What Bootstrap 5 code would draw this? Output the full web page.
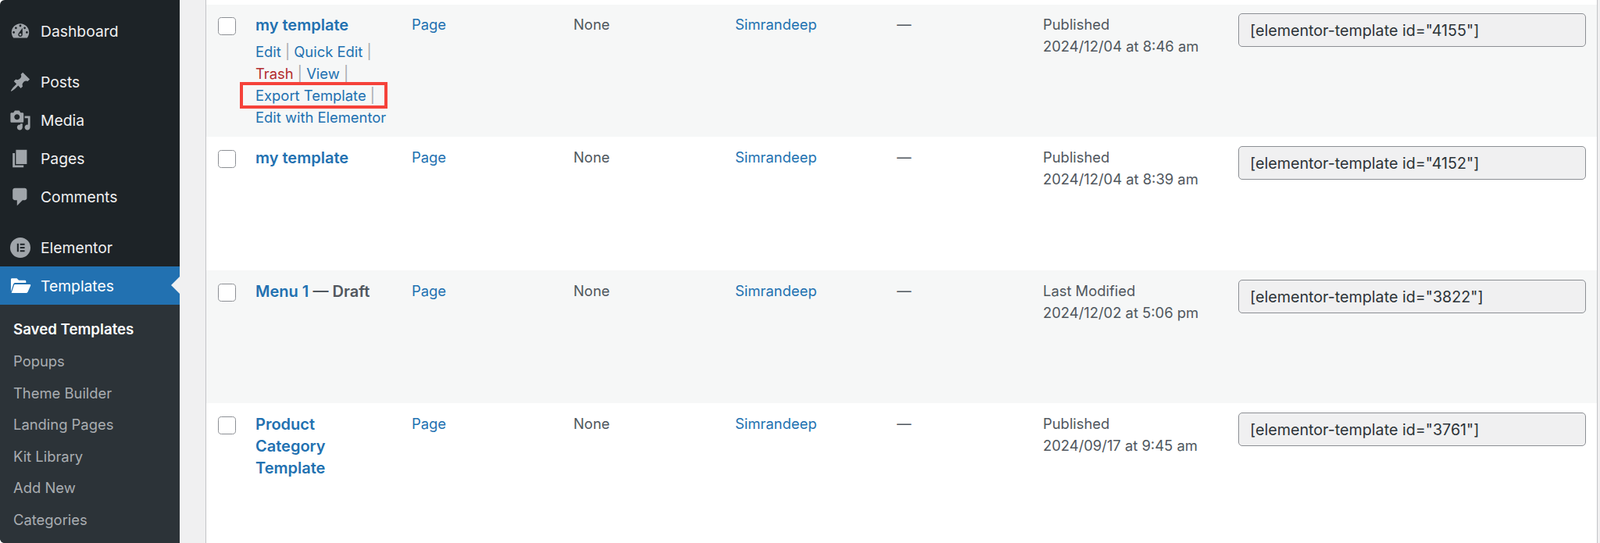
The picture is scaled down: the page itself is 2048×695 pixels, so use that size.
<!DOCTYPE html>
<html lang="en">
<head>
    <meta charset="UTF-8">
    <meta name="viewport" content="width=device-width, initial-scale=1.0">
    <title>Saved Templates</title>
    <link href="https://cdn.jsdelivr.net/npm/bootstrap@5.3.0/dist/css/bootstrap.min.css" rel="stylesheet">
    <style>
        html, body {
            height: 100%;
            overflow: hidden;
        }
        body {
            background: #fff;
            color: #50575e;
            font-family: Inter, "Liberation Sans", sans-serif;
            font-size: 18.4px;
            line-height: 28px;
        }
        a {
            color: #2271b1;
            text-decoration: none;
        }
        .wp-shell {
            height: 695px;
        }
        .wp-side {
            width: 230px;
            background: #1d2327;
            padding-top: 15px;
            border-radius: 6px 0 0 6px;
            overflow: hidden;
        }
        .wp-item {
            height: 49px;
            padding: 0 0 0 12px;
            gap: 12px;
            color: #f0f0f1;
            font-size: 19.3px;
            position: relative;
        }
        .wp-item svg {
            width: 28px;
            height: 28px;
            fill: #a0a5aa;
            flex: none;
        }
        .wp-gap {
            margin-top: 16px;
        }
        .wp-item.is-open {
            background: #2271b1;
            color: #fff;
        }
        .wp-item.is-open svg {
            fill: #fff;
        }
        .wp-item.is-open::after {
            content: "";
            position: absolute;
            right: 0;
            top: 13px;
            border: 11.5px solid transparent;
            border-right-color: #f0f0f1;
            border-left-width: 0;
        }
        .wp-sub {
            background: #2c3338;
            padding-top: 11.5px;
            flex: 1;
        }
        .wp-sub a {
            display: block;
            height: 40.6px;
            line-height: 40.6px;
            padding-left: 17px;
            color: #a9adb1;
        }
        .wp-sub a.is-current {
            color: #fff;
            font-size: 18.7px;
            font-weight: 600;
        }
        .wp-main {
            background: #f0f0f1;
            padding: 0 3px 0 33px;
        }
        .wp-panel {
            height: 100%;
            padding-top: 6px;
            background: #fff;
            border-left: 1px solid #c3c4c7;
            border-right: 1px solid #c3c4c7;
        }
        .wp-table {
            table-layout: fixed;
            width: 100%;
            margin: 0;
            color: #50575e;
        }
        .wp-table td {
            padding: 11px 0 0;
            vertical-align: top;
            background: transparent;
            color: #50575e;
            box-shadow: none;
        }
        .wp-table tr {
            height: 170px;
        }
        .wp-table tr:nth-child(1) {
            height: 169px;
        }
        .wp-table tr:nth-child(2) {
            height: 171px;
        }
        .wp-table tr:nth-child(odd) td {
            background: #f6f7f7;
        }
        .wp-table tr:not(:first-child) td {
            padding-top: 12px;
        }
        .wp-table td.cell-title {
            padding-top: 12px;
        }
        .wp-table tr:not(:first-child) td.cell-title {
            padding-top: 13px;
        }
        .wp-table td.cell-check {
            padding: 16px 0 0 15px;
        }
        .wp-table td.cell-code {
            padding: 11px 14px 0 0;
        }
        .wp-table tr:not(:first-child) td.cell-check {
            padding-top: 17px;
        }
        .wp-check {
            width: 23px;
            height: 23px;
            margin: 0;
            display: block;
            background-color: #fff;
            border: 1.5px solid #8c8f94;
            border-radius: 5px;
        }
        .row-title {
            font-size: 20px;
            font-weight: 600;
        }
        .row-state {
            font-size: 20px;
            font-weight: 600;
            color: #50575e;
        }
        .row-links {
            margin-top: 5.5px;
        }
        .row-line {
            display: block;
            white-space: nowrap;
            position: relative;
        }
        .row-sep {
            color: #a7aaad;
        }
        .row-trash {
            color: #b32d2e;
        }
        .row-mark {
            position: absolute;
            left: -20px;
            top: -2.5px;
            width: 189px;
            height: 34px;
            border: 4px solid #f5423a;
        }
        .code-box {
            height: 43px;
            padding: 0 14px;
            font-size: 19.7px;
            color: #2c3338;
            background: #f0f0f1;
            border: 1.5px solid #8c8f94;
            border-radius: 5px;
            font-family: Inter, "Liberation Sans", sans-serif;
        }
        .code-box:focus {
            background: #f0f0f1;
            border-color: #8c8f94;
            box-shadow: none;
        }
    </style>
</head>
<body>
    <div class="wp-shell d-flex">
        <div class="wp-side d-flex flex-column flex-shrink-0">
            <a class="wp-item d-flex align-items-center" href="#">
                <svg viewBox="0 0 20 20"><path fill-rule="evenodd" d="M3.76 16h12.48c1.1-1.37 1.76-3.11 1.76-5 0-4.42-3.58-8-8-8s-8 3.58-8 8c0 1.89.66 3.63 1.76 5zM10 4c.55 0 1 .45 1 1s-.45 1-1 1-1-.45-1-1 .45-1 1-1zM6 6c.55 0 1 .45 1 1s-.45 1-1 1-1-.45-1-1 .45-1 1-1zm8 0c.55 0 1 .45 1 1s-.45 1-1 1-1-.45-1-1 .45-1 1-1zm-5.37 5.55L12 7v6c0 1.1-.9 2-2 2s-2-.9-2-2c0-.57.24-1.08.63-1.45zM4 10c.55 0 1 .45 1 1s-.45 1-1 1-1-.45-1-1 .45-1 1-1zm12 0c.55 0 1 .45 1 1s-.45 1-1 1-1-.45-1-1 .45-1 1-1zm-5 3c0-.55-.45-1-1-1s-1 .45-1 1 .45 1 1 1 1-.45 1-1z"/></svg>
                Dashboard
            </a>
            <a class="wp-item wp-gap d-flex align-items-center" href="#">
                <svg viewBox="0 0 20 20"><path d="M10.44 3.02l1.82-1.82 6.36 6.35-1.83 1.82c-1.05-.68-2.48-.57-3.41.36l-.75.75c-.92.93-1.04 2.35-.35 3.41l-1.83 1.82-2.41-2.41-2.8 2.79c-.42.42-3.38 2.71-3.8 2.29s1.86-3.39 2.28-3.81l2.79-2.79L4.1 9.36l1.83-1.82c1.05.69 2.48.57 3.4-.36l.75-.75c.93-.92 1.05-2.35.36-3.41z"/></svg>
                Posts
            </a>
            <a class="wp-item d-flex align-items-center" href="#">
                <svg viewBox="0 0 20 20"><path fill-rule="evenodd" d="M13 11V4c0-.55-.45-1-1-1h-1.67L9 1H5L3.67 3H2c-.55 0-1 .45-1 1v7c0 .55.45 1 1 1h10c.55 0 1-.45 1-1zM7 4.5c1.38 0 2.5 1.12 2.5 2.5S8.38 9.5 7 9.5 4.5 8.38 4.5 7 5.62 4.5 7 4.5zM14 6h5v10.5c0 1.38-1.12 2.5-2.5 2.5S14 17.88 14 16.5s1.12-2.5 2.5-2.5c.17 0 .34.02.5.05V8h-3V6zm-4 8.05V13h2v3.5c0 1.38-1.12 2.5-2.5 2.5S7 17.88 7 16.5 8.12 14 9.5 14c.17 0 .34.02.5.05z"/></svg>
                Media
            </a>
            <a class="wp-item d-flex align-items-center" href="#">
                <svg viewBox="0 0 20 20"><path d="M6 15V2h10v13H6zm-1 1h8v2H3V5h2v11z"/></svg>
                Pages
            </a>
            <a class="wp-item d-flex align-items-center" href="#">
                <svg viewBox="0 0 20 20"><path d="M5 2h9c1.1 0 2 .9 2 2v7c0 1.1-.9 2-2 2h-2l-5 5v-5H5c-1.1 0-2-.9-2-2V4c0-1.1.9-2 2-2z"/></svg>
                Comments
            </a>
            <a class="wp-item wp-gap d-flex align-items-center" href="#">
                <svg viewBox="0 0 20 20"><path fill-rule="evenodd" d="M10 .7a9.3 9.3 0 1 0 0 18.6A9.3 9.3 0 0 0 10 .7zM7 6.2h1.5v7.6H7zM9.8 6.2H14v1.5H9.8zM9.8 9.25H14v1.5H9.8zM9.8 12.3H14v1.5H9.8z"/></svg>
                Elementor
            </a>
            <a class="wp-item is-open d-flex align-items-center" href="#">
                <svg viewBox="0 0 20 20"><path d="M1.4 15.2V4c0-.6.4-1 1-1h4.4l1.8 1.8h5.6c.6 0 1 .4 1 1v1.3H5.4c-.8 0-1.4.4-1.7 1.1L1.4 15.2z"/><path d="M5 8.6h13.7c.6 0 .9.5.7 1l-2.6 6c-.2.5-.6.8-1.1.8H1.9l2.4-7.2c.2-.4.4-.6.7-.6z"/></svg>
                Templates
            </a>
            <div class="wp-sub">
                <a class="is-current" href="#">Saved Templates</a>
                <a href="#">Popups</a>
                <a href="#">Theme Builder</a>
                <a href="#">Landing Pages</a>
                <a href="#">Kit Library</a>
                <a href="#">Add New</a>
                <a href="#">Categories</a>
            </div>
        </div>

        <div class="wp-main flex-grow-1">
            <div class="wp-panel">
                <table class="table table-borderless wp-table">
                    <colgroup>
                        <col style="width: 63px">
                        <col style="width: 200px">
                        <col style="width: 207px">
                        <col style="width: 207px">
                        <col style="width: 207px">
                        <col style="width: 187px">
                        <col style="width: 250px">
                        <col>
                    </colgroup>
                    <tbody>
                        <tr>
                            <td class="cell-check"><input class="form-check-input wp-check" type="checkbox"></td>
                            <td class="cell-title">
                                <a class="row-title" href="#">my template</a>
                                <div class="row-links">
                                    <span class="row-line"><a href="#">Edit</a> <span class="row-sep">|</span> <a href="#">Quick Edit</a> <span class="row-sep">|</span></span>
                                    <span class="row-line"><a class="row-trash" href="#">Trash</a> <span class="row-sep">|</span> <a href="#">View</a> <span class="row-sep">|</span></span>
                                    <span class="row-line"><a href="#">Export Template</a> <span class="row-sep">|</span><span class="row-mark"></span></span>
                                    <span class="row-line"><a href="#">Edit with Elementor</a></span>
                                </div>
                            </td>
                            <td><a href="#">Page</a></td>
                            <td>None</td>
                            <td><a href="#">Simrandeep</a></td>
                            <td>—</td>
                            <td>Published<br>2024/12/04 at 8:46 am</td>
                            <td class="cell-code" colspan="2"><input class="form-control code-box" type="text" readonly value='[elementor-template id="4155"]'></td>
                        </tr>
                        <tr>
                            <td class="cell-check"><input class="form-check-input wp-check" type="checkbox"></td>
                            <td class="cell-title"><a class="row-title" href="#">my template</a></td>
                            <td><a href="#">Page</a></td>
                            <td>None</td>
                            <td><a href="#">Simrandeep</a></td>
                            <td>—</td>
                            <td>Published<br>2024/12/04 at 8:39 am</td>
                            <td class="cell-code" colspan="2"><input class="form-control code-box" type="text" readonly value='[elementor-template id="4152"]'></td>
                        </tr>
                        <tr>
                            <td class="cell-check"><input class="form-check-input wp-check" type="checkbox"></td>
                            <td class="cell-title"><a class="row-title" href="#">Menu 1</a> <span class="row-state">— Draft</span></td>
                            <td><a href="#">Page</a></td>
                            <td>None</td>
                            <td><a href="#">Simrandeep</a></td>
                            <td>—</td>
                            <td>Last Modified<br>2024/12/02 at 5:06 pm</td>
                            <td class="cell-code" colspan="2"><input class="form-control code-box" type="text" readonly value='[elementor-template id="3822"]'></td>
                        </tr>
                        <tr>
                            <td class="cell-check"><input class="form-check-input wp-check" type="checkbox"></td>
                            <td class="cell-title"><a class="row-title" href="#">Product<br>Category<br>Template</a></td>
                            <td><a href="#">Page</a></td>
                            <td>None</td>
                            <td><a href="#">Simrandeep</a></td>
                            <td>—</td>
                            <td>Published<br>2024/09/17 at 9:45 am</td>
                            <td class="cell-code" colspan="2"><input class="form-control code-box" type="text" readonly value='[elementor-template id="3761"]'></td>
                        </tr>
                    </tbody>
                </table>
            </div>
        </div>
    </div>
    <script src="https://cdn.jsdelivr.net/npm/bootstrap@5.3.0/dist/js/bootstrap.bundle.min.js"></script>
</body>
</html>
